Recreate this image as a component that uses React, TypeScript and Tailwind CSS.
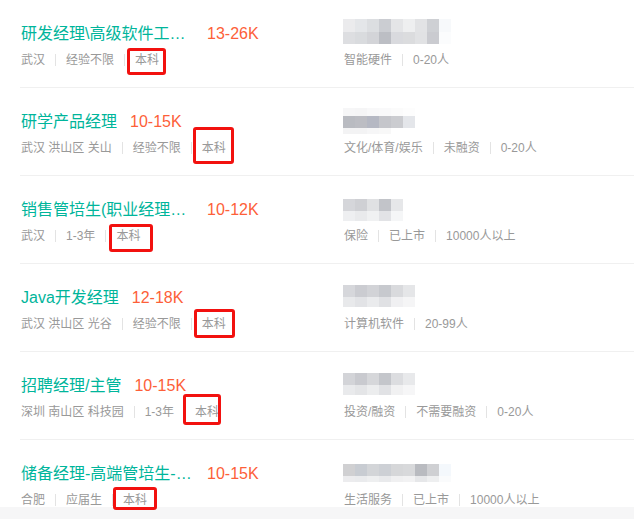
type Band = { y: number; h: number; c: string[] };

type Job = {
  title: string;
  salary: string;
  meta: string[];
  box: string;
  industry: string[];
  blur: Band[];
};

const JOBS: Job[] = [
  {
    title: "研发经理\\高级软件工程师",
    salary: "13-26K",
    meta: ["武汉", "经验不限", "本科"],
    box: "left-[-8px] top-[-2px] w-[39px] h-[27px]",
    industry: ["智能硬件", "0-20人"],
    blur: [
      { y: 0, h: 13, c: ["#ebebed", "#e4e6e9", "#dcdee1", "#cbcdd2", "#e4e5e7", "#eeeff0", "#e2e3e5", "#ced0d4", "#f7f9fb"] },
      { y: 13, h: 12, c: ["#dddee1", "#d9dbde", "#d3d4d8", "#bcbec4", "#d9dade", "#dbdcde", "#e1e2e4", "#cacbd0", "#fbfcfd"] },
    ],
  },
  {
    title: "研学产品经理",
    salary: "10-15K",
    meta: ["武汉 洪山区 关山", "经验不限", "本科"],
    box: "left-[-9px] top-[-11px] w-[41px] h-[37px]",
    industry: ["文化/体育/娱乐", "未融资", "0-20人"],
    blur: [
      { y: 1, h: 8, c: ["#f6f6f7", "#f5f5f6", "#f8f8f9", "#f9f9fa", "#fbfbfb", "#fdfdfd"] },
      { y: 9, h: 12, c: ["#b9bbc1", "#bcbdc3", "#b5b8c3", "#c5c6cb", "#cbccd0", "#e4e6ea"] },
      { y: 21, h: 6, c: ["#f3f3f4", "#f3f3f4", "#f6f6f7", "#f8f8f8", "#ffffff", "#ffffff"] },
    ],
  },
  {
    title: "销售管培生(职业经理人方向)",
    salary: "10-12K",
    meta: ["武汉", "1-3年", "本科"],
    box: "left-[-7px] top-[-2px] w-[44px] h-[28px]",
    industry: ["保险", "已上市", "10000人以上"],
    blur: [
      { y: 4, h: 12, c: ["#d5d6da", "#cfd0d4", "#e0e1e3", "#c2c4c9", "#e6e7e9"] },
      { y: 16, h: 10, c: ["#eeeff1", "#e9eaec", "#f0f1f2", "#e2e3e6", "#f5f6f7"] },
    ],
  },
  {
    title: "Java开发经理",
    salary: "12-18K",
    meta: ["武汉 洪山区 光谷", "经验不限", "本科"],
    box: "left-[-8px] top-[-5px] w-[41px] h-[29px]",
    industry: ["计算机软件", "20-99人"],
    blur: [
      { y: 2, h: 12, c: ["#d6d7db", "#cbccd1", "#d2d3d7", "#c7c9ce", "#d9dadd", "#e5e6e8"] },
      { y: 14, h: 10, c: ["#e8e9eb", "#e2e3e6", "#eaebed", "#e0e1e4", "#f0f0f2", "#f5f5f6"] },
    ],
  },
  {
    title: "招聘经理/主管",
    salary: "10-15K",
    meta: ["深圳 南山区 科技园", "1-3年", "本科"],
    box: "left-[-12px] top-[-8px] w-[38px] h-[31px]",
    industry: ["投资/融资", "不需要融资", "0-20人"],
    blur: [
      { y: 2, h: 12, c: ["#d3d4d8", "#c9cacf", "#d6d7da", "#c4c6cb", "#dcdde0", "#e8e9eb"] },
      { y: 14, h: 10, c: ["#e9eaec", "#e4e5e7", "#ecedee", "#e1e2e5", "#f1f1f2", "#f6f6f7"] },
    ],
  },
  {
    title: "储备经理-高端管培生-金融",
    salary: "10-15K",
    meta: ["合肥", "应届生", "本科"],
    box: "left-[-10px] top-[-3px] w-[44px] h-[23px]",
    industry: ["生活服务", "已上市", "10000人以上"],
    blur: [
      { y: 5, h: 12, c: ["#d0d0d2", "#c8ccd2", "#d3d5d8", "#cdd0d5", "#d6d7d9", "#d8d9db", "#b9bbc0", "#cfd0d3", "#f4f8fc"] },
      { y: 17, h: 6, c: ["#ececee", "#eaebed", "#eeeff0", "#e9eaec", "#f0f0f1", "#f2f2f3", "#e6e7e9", "#eeeff0", "#fafbfc"] },
    ],
  },
];

function Blurred({ bands }: { bands: Band[] }) {
  return (
    <svg width="112" height="28" viewBox="0 0 112 28" className="ml-[-1px] block">
      <defs>
        <filter id="soft" x="-5%" y="-10%" width="110%" height="120%">
          <feGaussianBlur stdDeviation="0.5" />
        </filter>
      </defs>
      <g filter="url(#soft)">
        {bands.map((b) =>
          b.c.map((col, i) => (
            <rect key={`${b.y}-${i}`} x={i * 12} y={b.y} width="12" height={b.h} fill={col} />
          ))
        )}
      </g>
    </svg>
  );
}

function Meta({ items, box }: { items: string[]; box?: string }) {
  return (
    <div className="flex h-[20px] items-center whitespace-nowrap text-[12px] leading-[20px] text-[#999]">
      {items.map((t, i) => (
        <div key={i} className="flex items-center">
          {i > 0 && <span className="mx-[10px] h-[12px] w-px bg-[#e3e3e3]" />}
          {box && i === items.length - 1 ? (
            <span className="relative">
              {t}
              <span className={`absolute z-20 rounded-[3px] border-[3px] border-[#f2110f] ${box}`} />
            </span>
          ) : (
            <span>{t}</span>
          )}
        </div>
      ))}
    </div>
  );
}

export default function App() {
  return (
    <div className="relative h-[519px] w-[634px] overflow-hidden bg-white font-['Liberation_Sans','Noto_Sans_CJK_SC',sans-serif]">
      <ul className="ml-[20px]">
        {JOBS.map((j) => (
          <li key={j.title} className="flex border-b border-[#f0f0f0]">
            <div className="w-[324px] pb-[17px] pl-[1px] pt-[22px]">
              <div className="flex h-[24px] items-center text-[16px] leading-[24px]">
                <span className="max-w-[173px] truncate text-[#00b59b]">{j.title}</span>
                <span className="ml-[13px] text-[#fd5f39]">{j.salary}</span>
              </div>
              <div className="mt-[4px]">
                <Meta items={j.meta} box={j.box} />
              </div>
            </div>
            <div className="pt-[19px]">
              <Blurred bands={j.blur} />
              <div className="mt-[3px]">
                <Meta items={j.industry} />
              </div>
            </div>
          </li>
        ))}
      </ul>
      <div className="absolute inset-x-0 bottom-0 z-10 h-[12px] bg-[#f6f6f7]" />
    </div>
  );
}
